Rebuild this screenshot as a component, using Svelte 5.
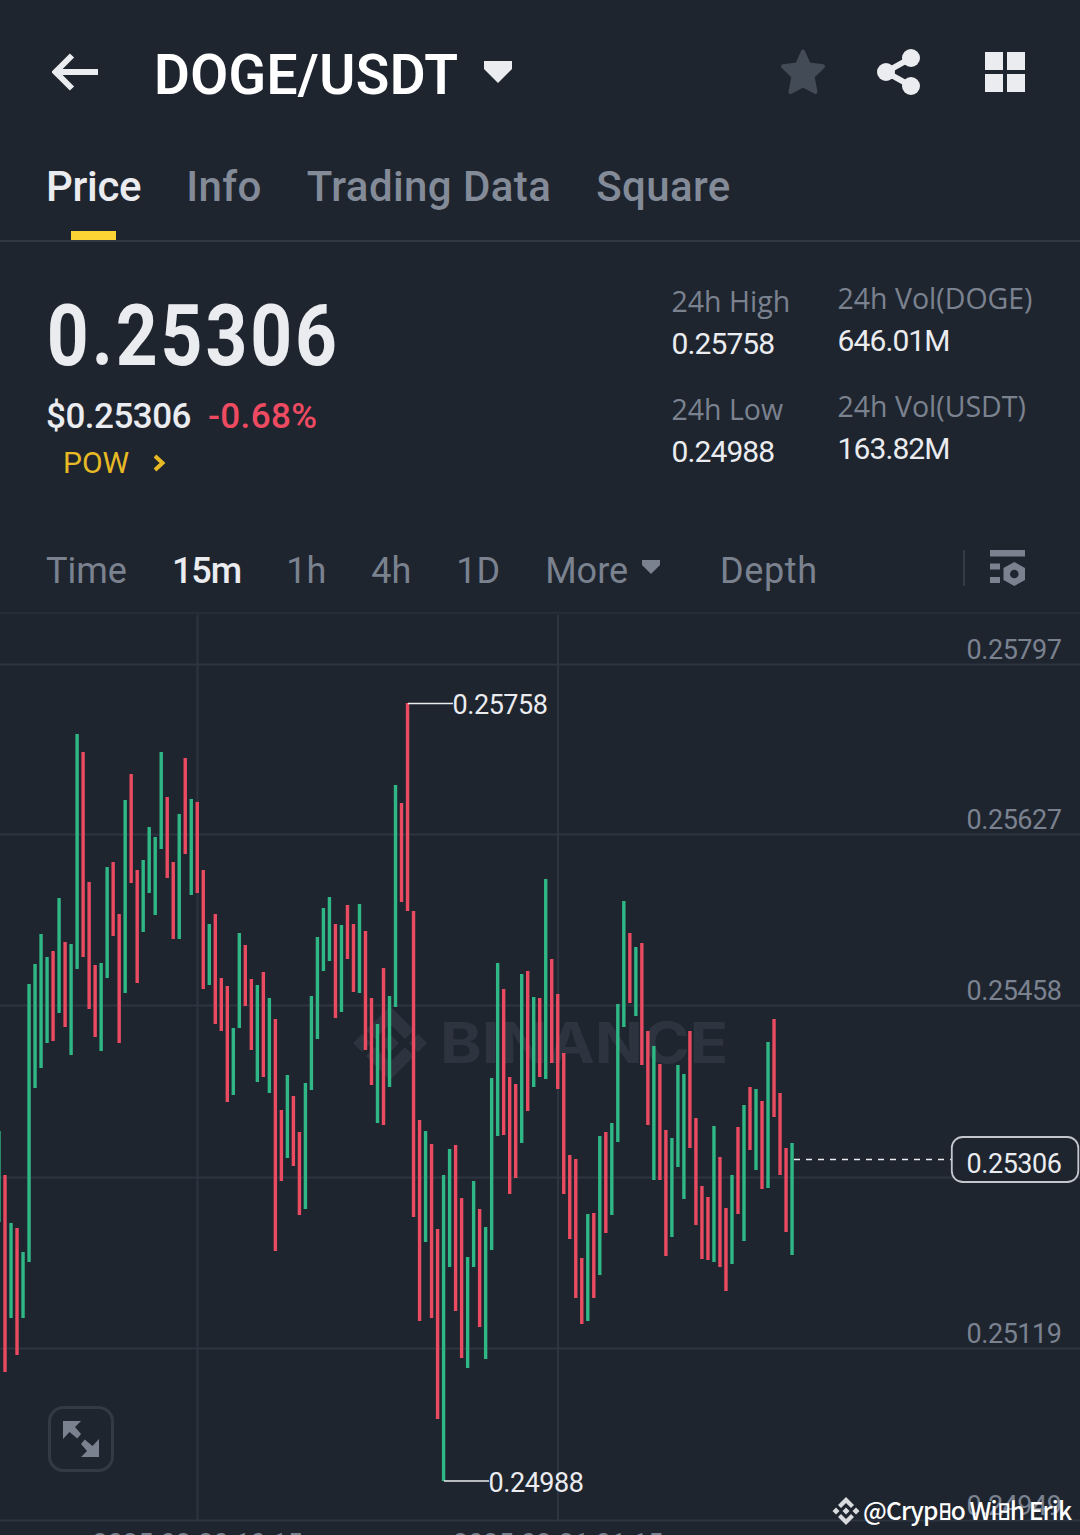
<script>
  const tabs = ["Price", "Info", "Trading Data", "Square"];
  let activeTab = "Price";

  const intervals = ["Time", "15m", "1h", "4h", "1D"];
  let activeInterval = "15m";

  const stats = [
    { label: "24h High", value: "0.25758" },
    { label: "24h Vol(DOGE)", value: "646.01M" },
    { label: "24h Low", value: "0.24988" },
    { label: "24h Vol(USDT)", value: "163.82M" }
  ];

  // grid lines, label is the price on the right axis
  const rows = [
    { y: 664, label: "0.25797" },
    { y: 834, label: "0.25627" },
    { y: 1005, label: "0.25458" },
    { y: 1177, label: "" },
    { y: 1348, label: "0.25119" },
    { y: 1520, label: "0.24949" }
  ];
  const columns = [
    { x: 197.5, label: "2025-02-20 10:15" },
    { x: 558, label: "2025-02-21 01:15" }
  ];

  // [direction, high, low], one entry per 15m bar
  const bars = [
    ["g", 1131, 1222], ["r", 1175, 1372], ["g", 1223, 1318], ["r", 1228, 1355], ["g", 1252, 1318],
    ["g", 984, 1262], ["g", 964, 1088], ["g", 934, 1068], ["g", 957, 1043], ["r", 951, 1041],
    ["g", 898, 1013], ["r", 942, 1027], ["g", 944, 1055], ["g", 734, 969], ["r", 752, 957],
    ["r", 882, 1009], ["r", 965, 1037], ["g", 963, 1051], ["g", 867, 978], ["r", 862, 936],
    ["r", 914, 1043], ["g", 800, 993], ["r", 774, 883], ["r", 870, 983], ["g", 860, 932],
    ["g", 827, 893], ["g", 837, 915], ["g", 752, 849], ["r", 797, 878], ["r", 862, 939],
    ["g", 814, 939], ["r", 758, 854], ["g", 799, 895], ["r", 802, 893], ["r", 870, 989],
    ["g", 924, 985], ["r", 914, 1024], ["r", 978, 1031], ["r", 986, 1102], ["g", 1028, 1095],
    ["g", 933, 1028], ["r", 945, 1006], ["r", 979, 1050], ["g", 985, 1082], ["r", 972, 1077],
    ["g", 998, 1093], ["r", 1019, 1251], ["r", 1110, 1181], ["g", 1075, 1158], ["r", 1096, 1166],
    ["r", 1132, 1215], ["g", 1083, 1209], ["g", 996, 1090], ["g", 937, 1039], ["g", 908, 971],
    ["g", 897, 961], ["r", 924, 1018], ["g", 925, 1012], ["r", 905, 959], ["r", 924, 992],
    ["g", 904, 993], ["r", 931, 1050], ["r", 998, 1085], ["g", 1024, 1123], ["r", 968, 1125],
    ["g", 996, 1087], ["g", 785, 1007], ["r", 803, 902], ["r", 703, 911], ["r", 911, 1217],
    ["r", 1120, 1321], ["g", 1131, 1242], ["r", 1144, 1318], ["r", 1229, 1419], ["g", 1175, 1481],
    ["g", 1149, 1267], ["r", 1145, 1311], ["r", 1198, 1358], ["g", 1257, 1368], ["g", 1181, 1267],
    ["r", 1209, 1327], ["g", 1227, 1359], ["g", 1078, 1250], ["g", 963, 1136], ["r", 989, 1135],
    ["r", 1077, 1194], ["r", 1084, 1178], ["g", 974, 1143], ["r", 971, 1111], ["g", 997, 1087],
    ["r", 998, 1077], ["g", 879, 1079], ["r", 959, 1063], ["r", 994, 1089], ["r", 1053, 1194],
    ["r", 1155, 1239], ["r", 1159, 1298], ["r", 1258, 1324], ["g", 1214, 1321], ["r", 1213, 1298],
    ["g", 1136, 1275], ["r", 1132, 1233], ["g", 1123, 1215], ["g", 1004, 1142], ["g", 901, 1027],
    ["r", 933, 1003], ["g", 947, 1016], ["r", 943, 1065], ["r", 1031, 1125], ["g", 1046, 1180],
    ["r", 1064, 1180], ["r", 1130, 1256], ["g", 1138, 1237], ["g", 1065, 1167], ["g", 1074, 1199],
    ["r", 1031, 1148], ["r", 1118, 1225], ["r", 1186, 1259], ["r", 1197, 1260], ["g", 1126, 1262],
    ["r", 1157, 1267], ["r", 1208, 1291], ["g", 1175, 1264], ["r", 1127, 1214], ["g", 1105, 1241],
    ["r", 1087, 1150], ["g", 1089, 1170], ["r", 1101, 1189], ["g", 1042, 1188], ["r", 1019, 1117],
    ["r", 1093, 1175], ["r", 1148, 1232], ["g", 1143, 1255]
  ];
  const barX = i => -1 + i * 6.008;
</script>

<style>
  :global(body) {
    margin: 0;
    background: #1f252f;
  }
  .screen {
    width: 1080px;
    height: 1535px;
    overflow: hidden;
    display: flex;
    flex-direction: column;
    background: #1f252f;
    color: #eaecef;
    font-family: Roboto, "Liberation Sans", sans-serif;
  }
  svg {
    display: block;
    flex: none;
  }

  header {
    height: 145px;
    box-sizing: border-box;
    padding: 0 55px 2px 52px;
    display: flex;
    align-items: center;
  }
  h1 {
    margin: 7px 0 0 56px;
    width: 330px;
    font-size: 55px;
    font-weight: 600;
    line-height: 70px;
    letter-spacing: 0.4px;
    color: #fff;
    white-space: nowrap;
  }
  .actions {
    margin-left: auto;
    display: flex;
    align-items: center;
  }
  .actions svg:nth-child(2) {
    margin: 0 65px 0 51px;
  }

  nav {
    height: 95px;
    padding-left: 46px;
    display: flex;
    gap: 45px;
    border-bottom: 2px solid #323841;
  }
  .tab {
    display: flex;
    flex-direction: column;
    align-items: center;
    justify-content: space-between;
    font-size: 42px;
    font-weight: 500;
    line-height: 84px;
    letter-spacing: 0.4px;
    color: #848b98;
    white-space: nowrap;
  }
  .tab.active {
    letter-spacing: -0.3px;
    color: #eaecef;
  }
  .tab.active::after {
    content: "";
    width: 45px;
    height: 9px;
    background: #fcd535;
  }

  .summary {
    height: 286px;
    display: flex;
    justify-content: space-between;
  }
  .price {
    padding: 44px 0 0 46px;
  }
  .last {
    width: 340px;
    padding-left: 1px;
    font-size: 86px;
    font-weight: 700;
    line-height: 100px;
    letter-spacing: 3.4px;
    transform: scaleX(0.85);
    transform-origin: left;
  }
  .change {
    display: flex;
    gap: 17px;
    margin-top: 10px;
    font-size: 35px;
    font-weight: 500;
    line-height: 42px;
    letter-spacing: -0.5px;
  }
  .down {
    color: #ee4b62;
    letter-spacing: 0.4px;
  }
  .tag {
    display: flex;
    align-items: center;
    gap: 24px;
    padding-left: 17px;
    margin-top: 6px;
    font-size: 30px;
    line-height: 38px;
    color: #e6b925;
  }
  .stats {
    display: grid;
    grid-template-columns: 166px 242.5px;
    grid-auto-rows: 108px;
    padding-top: 39px;
  }
  .stat:nth-child(even) {
    margin-top: -3px;
  }
  .label {
    font-family: "Open Sans", sans-serif;
    font-size: 28.5px;
    line-height: 40px;
    color: #7b828f;
    white-space: nowrap;
  }
  .value {
    font-size: 30px;
    line-height: 46px;
    letter-spacing: -0.9px;
  }

  .intervals {
    height: 86px;
    box-sizing: border-box;
    padding: 1px 54px 0 46px;
    display: flex;
    align-items: center;
    font-size: 36px;
    color: #7b828f;
    border-bottom: 2px solid #272d37;
  }
  .interval {
    margin-right: 45px;
  }
  .interval.active {
    color: #eaecef;
    font-weight: 500;
    letter-spacing: -1px;
  }
  .more {
    display: flex;
    align-items: center;
    gap: 14px;
    margin-right: 60px;
  }
  .more svg {
    margin-bottom: 7px;
  }
  .depth {
    letter-spacing: 0.6px;
  }
  .settings {
    margin: 0 0 5px auto;
    padding-left: 25px;
    border-left: 2px solid #343a45;
  }

  .chart text {
    font-family: Roboto, sans-serif;
    font-size: 27px;
  }
  .chart .watermark {
    font-family: Inter, sans-serif;
    font-size: 56px;
    font-weight: 700;
  }
  .chart .credit {
    font-family: "Noto Sans CJK SC", "Noto Sans", sans-serif;
    font-size: 24.5px;
    font-weight: 500;
  }
  .missing {
    font-size: 23px;
  }
  .grid {
    stroke: #2f3540;
    stroke-width: 2;
  }
  .axis {
    fill: #7b828f;
  }
  .g {
    stroke: #2fb886;
  }
  .r {
    stroke: #ea4b61;
  }
</style>

<div class="screen">
  <header>
    <svg width="46" height="38" viewBox="0 0 46 38">
      <path d="M46 19H4M20 2.500L3.500 19L20 35.500" fill="none" stroke="#eaecef" stroke-width="6" />
    </svg>
    <h1>DOGE/USDT</h1>
    <svg width="28" height="22" viewBox="0 0 28 22">
      <path d="M0 0H28V8L14 22L0 8Z" fill="#eaecef" />
    </svg>
    <div class="actions">
      <svg width="46" height="48" viewBox="0 0 46 48">
        <path
          d="M23 3.500L28.800 16.500L43 18.200L32.500 28.500L35.500 44L23 37.500L10.500 44L13.500 28.500L3 18.200L17.200 16.500Z"
          fill="#434b57"
          stroke="#434b57"
          stroke-width="4"
          stroke-linejoin="round" />
      </svg>
      <svg width="43" height="46" viewBox="0 0 43 46">
        <path d="M34 9L9 23L34 37" fill="none" stroke="#eaecef" stroke-width="6" />
        <circle cx="34" cy="9" r="9" fill="#eaecef" />
        <circle cx="9" cy="23" r="9" fill="#eaecef" />
        <circle cx="34" cy="37" r="9" fill="#eaecef" />
      </svg>
      <svg width="40" height="40" viewBox="0 0 40 40">
        <path d="M0 0H18V18H0ZM22 0H40V18H22ZM0 22H18V40H0ZM22 22H40V40H22Z" fill="#eaecef" />
      </svg>
    </div>
  </header>

  <nav>
    {#each tabs as tab}
      <div class="tab" class:active={tab === activeTab}>{tab}</div>
    {/each}
  </nav>

  <section class="summary">
    <div class="price">
      <div class="last">0.25306</div>
      <div class="change">
        <span>$0.25306</span>
        <span class="down">-0.68%</span>
      </div>
      <div class="tag">
        POW
        <svg width="13" height="18" viewBox="0 0 13 18">
          <path d="M2 2L9.500 9L2 16" fill="none" stroke="#e6b925" stroke-width="4" />
        </svg>
      </div>
    </div>
    <div class="stats">
      {#each stats as stat}
        <div class="stat">
          <div class="label">{stat.label}</div>
          <div class="value">{stat.value}</div>
        </div>
      {/each}
    </div>
  </section>

  <div class="intervals">
    {#each intervals as interval}
      <span class="interval" class:active={interval === activeInterval}>{interval}</span>
    {/each}
    <span class="more">
      More
      <svg width="18" height="14" viewBox="0 0 18 14">
        <path d="M0 0H18V5L9 14L0 5Z" fill="#7b828f" />
      </svg>
    </span>
    <span class="depth">Depth</span>
    <div class="settings">
      <svg width="36" height="36" viewBox="0 0 36 36">
        <path d="M0 0H35V6.500H0ZM0 13.500H10V19.500H0ZM0 27H10V33H0Z" fill="#7b828f" />
        <path
          d="M24.300 12L35 18V30L24.300 36L13.500 30V18ZM24.300 19.700A4.300 4.300 0 1 0 24.300 28.300A4.300 4.300 0 1 0 24.300 19.700Z"
          fill="#7b828f"
          fill-rule="evenodd" />
      </svg>
    </div>
  </div>

  <svg class="chart" width="1080" height="921" viewBox="0 614 1080 921">
    {#each rows as row}
      <line class="grid" x1="0" x2="1080" y1={row.y + 0.5} y2={row.y + 0.5} />
      {#if row.label}
        <text class="axis" x="966.500" y={row.y - 5} textLength="95.500">{row.label}</text>
      {/if}
    {/each}
    {#each columns as column}
      <line class="grid" x1={column.x} x2={column.x} y1="615" y2="1520" />
      <text class="axis" x={column.x} y="1553" text-anchor="middle" textLength="210">{column.label}</text>
    {/each}

    <!-- binance watermark -->
    <g fill="#2e343f">
      <path d="M366 1030L390 1006L414 1030L405 1039L390 1024L375 1039Z" />
      <path d="M366 1056L390 1080L414 1056L405 1047L390 1062L375 1047Z" />
      <path d="M353 1043L362 1034L371 1043L362 1052ZM409 1043L418 1034L427 1043L418 1052ZM381 1043L390 1034L399 1043L390 1052Z" />
      <text class="watermark" x="440" y="1063" textLength="288" lengthAdjust="spacingAndGlyphs">BINANCE</text>
    </g>

    {#each bars as [dir, high, low], i}
      <line class={dir} x1={barX(i)} x2={barX(i)} y1={high} y2={low} stroke-width="3.4" />
    {/each}

    <g stroke="#eaecef" stroke-width="1.600">
      <path d="M408 703.500H453M444 1481H489" />
      <path d="M794 1159.500H951" stroke-dasharray="6" />
    </g>
    <g fill="#eaecef">
      <text x="452.500" y="714" textLength="95.500">0.25758</text>
      <text x="488.500" y="1492" textLength="95.500">0.24988</text>
    </g>

    <rect x="951.800" y="1137" width="126.500" height="45" rx="11" fill="#1f252f" stroke="#c3c6cc" stroke-width="1.800" />
    <text x="966.500" y="1173" fill="#eaecef" textLength="95.500">0.25306</text>

    <!-- fullscreen button -->
    <rect x="49.500" y="1407.500" width="63" height="63" rx="14" fill="none" stroke="#343a45" stroke-width="3" />
    <path
      d="M63 1421H81L75 1427L81 1434L77.300 1438.500L69.500 1432L63 1439ZM99 1457H81L87 1451L81 1444L84.700 1439.500L92.500 1446L99 1439Z"
      fill="#7b828f" />

    <!-- credit over the chart -->
    <path
      d="M838 1505L846 1497L854 1505L851 1508L846 1503L841 1508ZM838 1517L846 1525L854 1517L851 1514L846 1519L841 1514ZM832.500 1511L836 1507.500L839.500 1511L836 1514.500ZM852.500 1511L856 1507.500L859.500 1511L856 1514.500ZM842.500 1511L846 1507.500L849.500 1511L846 1514.500Z"
      fill="#d8dade" />
    <text class="credit" x="863" y="1520" fill="#fff" textLength="209">@Cryp<tspan class="missing">𐌇</tspan>o Wi<tspan class="missing">𐌇</tspan>h Erik</text>
  </svg>
</div>
